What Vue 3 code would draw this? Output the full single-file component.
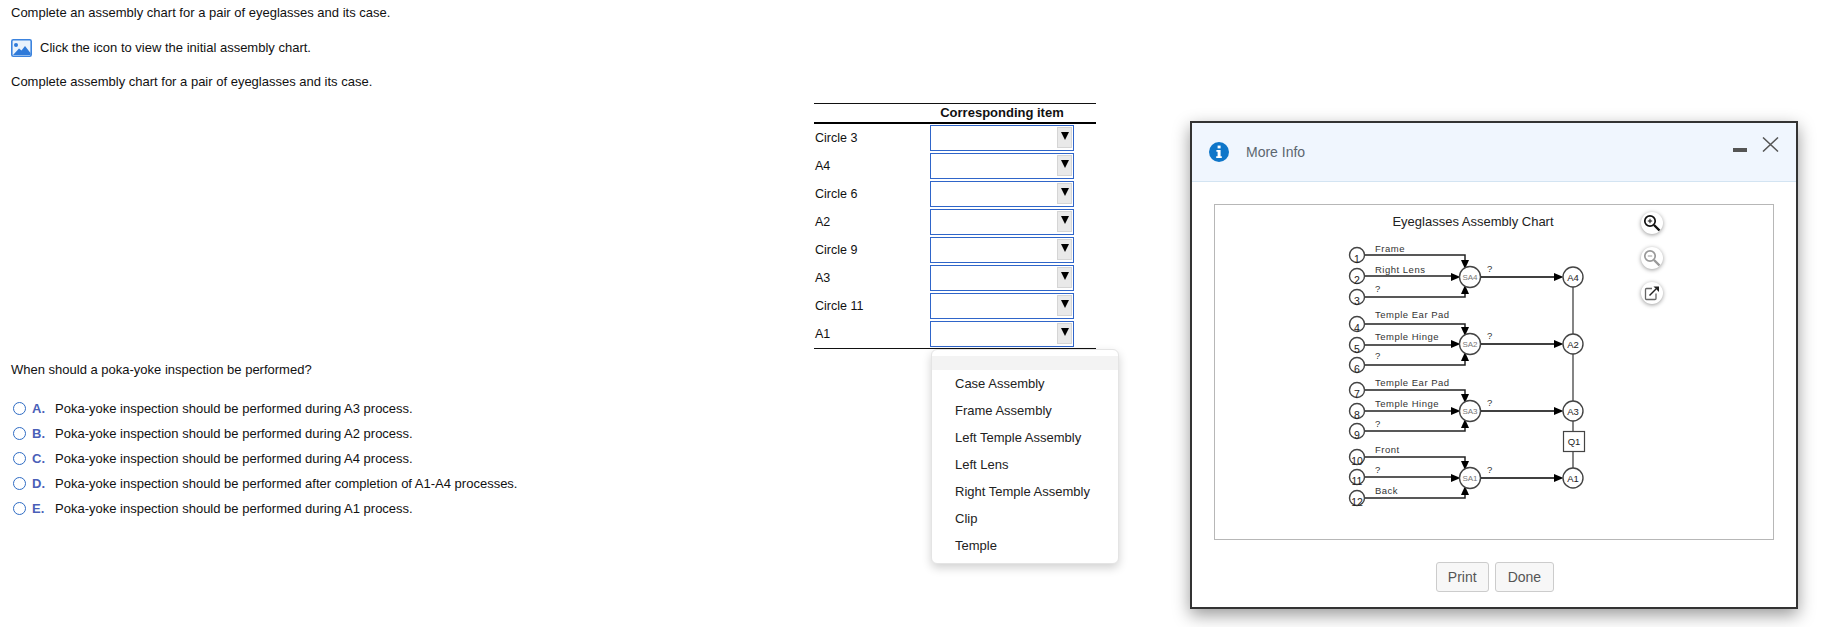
<script setup>
const rows = ['Circle 3', 'A4', 'Circle 6', 'A2', 'Circle 9', 'A3', 'Circle 11', 'A1']
const answers = [
  { key: 'A.', text: 'Poka-yoke inspection should be performed during A3 process.' },
  { key: 'B.', text: 'Poka-yoke inspection should be performed during A2 process.' },
  { key: 'C.', text: 'Poka-yoke inspection should be performed during A4 process.' },
  { key: 'D.', text: 'Poka-yoke inspection should be performed after completion of A1-A4 processes.' },
  { key: 'E.', text: 'Poka-yoke inspection should be performed during A1 process.' }
]
const menuItems = ['Case Assembly', 'Frame Assembly', 'Left Temple Assembly', 'Left Lens', 'Right Temple Assembly', 'Clip', 'Temple']

// one group = three inputs going into a sub assembly, then on to the final circle
const groups = [
  { sa: 'SA4', a: 'A4', y: 277, first: 1, ys: [255, 276, 297], labels: ['Frame', 'Right Lens', '?'], ly: [252, 273, 292] },
  { sa: 'SA2', a: 'A2', y: 344, first: 4, ys: [324, 345, 365], labels: ['Temple Ear Pad', 'Temple Hinge', '?'], ly: [318, 340, 359] },
  { sa: 'SA3', a: 'A3', y: 411, first: 7, ys: [390, 411, 431], labels: ['Temple Ear Pad', 'Temple Hinge', '?'], ly: [386, 407, 427] },
  { sa: 'SA1', a: 'A1', y: 478, first: 10, ys: [457, 477, 498], labels: ['Front', '?', 'Back'], ly: [453, 473, 494] }
]
</script>

<template>
  <div class="page">
    <p class="line first">Complete an assembly chart for a pair of eyeglasses and its case.</p>
    <p class="line icon-line">
      <svg class="img-icon" width="21" height="18" viewBox="0 0 21 18">
        <rect x="0.8" y="0.8" width="19.4" height="16.4" rx="1.5" fill="#e9f2fc" stroke="#3b83de" stroke-width="1.6" />
        <circle cx="5" cy="6" r="2" fill="#2f7ad9" />
        <path d="M2 16 L8 9.5 L10.5 11.5 L14 7 L19.5 14 V16 Z" fill="#2f7ad9" />
      </svg>
      <span>Click the icon to view the initial assembly chart.</span>
    </p>
    <p class="line third">Complete assembly chart for a pair of eyeglasses and its case.</p>

    <table class="items">
      <thead>
        <tr>
          <th></th>
          <th>Corresponding item</th>
        </tr>
      </thead>
      <tbody>
        <tr v-for="row in rows" :key="row">
          <td class="row-name">{{ row }}</td>
          <td>
            <div class="combo"><span class="combo-btn"><i></i></span></div>
          </td>
        </tr>
      </tbody>
    </table>

    <p class="line question">When should a poka-yoke inspection be performed?</p>
    <div class="answers">
      <label v-for="a in answers" :key="a.key" class="answer">
        <span class="radio"></span>
        <b>{{ a.key }}</b>
        <span>{{ a.text }}</span>
      </label>
    </div>

    <div class="menu">
      <div class="menu-blank"></div>
      <div v-for="item in menuItems" :key="item" class="menu-item">{{ item }}</div>
    </div>

    <section class="dialog">
      <header class="dialog-head">
        <svg width="20" height="20" viewBox="0 0 20 20">
          <circle cx="10" cy="10" r="10" fill="#0f76c9" />
          <rect x="8.6" y="3.6" width="3" height="2.8" fill="#fff" />
          <path d="M7.4 8h4.2v6.2h1.2v1.8H7.2v-1.8h1.4V9.8H7.4z" fill="#fff" />
        </svg>
        <span class="dialog-title">More Info</span>
        <span class="minimize"></span>
        <svg class="close" width="17" height="15" viewBox="0 0 17 15">
          <path d="M1 0.5 L16 14.5 M16 0.5 L1 14.5" stroke="#555" stroke-width="1.5" fill="none" />
        </svg>
      </header>

      <div class="dialog-body">
        <div class="chart">
          <svg class="diagram" width="557" height="333" viewBox="1215 205 557 333">
            <text x="1473" y="226" class="chart-title" text-anchor="middle">Eyeglasses Assembly Chart</text>
            <path d="M1573 287V468" class="spine" />
            <g v-for="g in groups" :key="g.sa">
              <g v-for="(y, i) in g.ys" :key="i">
                <path v-if="i === 0" :d="`M1364 ${y}H1465V${g.y - 15}`" class="wire" />
                <path v-else-if="i === 1" :d="`M1364 ${y}H1455`" class="wire" />
                <path v-else :d="`M1364 ${y}H1465V${g.y + 15}`" class="wire" />
                <circle cx="1357" :cy="y" r="7.5" class="node" />
                <text x="1357" :y="y + 7.5" class="num" text-anchor="middle">{{ g.first + i }}</text>
                <text x="1375" :y="g.ly[i]" class="label">{{ g.labels[i] }}</text>
              </g>
              <path :d="`M1461 ${g.y - 17}h8l-4 9z`" class="head" />
              <path :d="`M1451 ${g.y - 4}v8l9.5 -4z`" class="head" />
              <path :d="`M1461 ${g.y + 17}h8l-4 -9z`" class="head" />
              <circle cx="1470" :cy="g.y" r="10.5" class="node" />
              <text x="1470" :y="g.y + 3" class="sa" text-anchor="middle">{{ g.sa }}</text>
              <path :d="`M1481 ${g.y}H1556`" class="out" />
              <path :d="`M1554 ${g.y - 4}v8l9.5 -4z`" class="head" />
              <text x="1490" :y="g.y - 5" class="label" text-anchor="middle">?</text>
              <circle cx="1573" :cy="g.y" r="10" class="node" />
              <text x="1573" :y="g.y + 3.5" class="a-label" text-anchor="middle">{{ g.a }}</text>
            </g>
            <rect x="1563.5" y="431.5" width="21" height="20" class="qbox" />
            <text x="1574" y="445" class="a-label" text-anchor="middle">Q1</text>
          </svg>

          <div class="tools">
            <span class="tool">
              <svg width="18" height="18" viewBox="0 0 18 18">
                <circle cx="7" cy="7" r="5.2" fill="none" stroke="#111" stroke-width="1.7" />
                <path d="M11 11l5.5 5.5" stroke="#111" stroke-width="2.4" />
                <path d="M4.8 7h4.4M7 4.8v4.4" stroke="#111" stroke-width="1" />
              </svg>
            </span>
            <span class="tool">
              <svg width="18" height="18" viewBox="0 0 18 18">
                <circle cx="7" cy="7" r="5.2" fill="none" stroke="#999" stroke-width="1.7" />
                <path d="M11 11l5.5 5.5" stroke="#999" stroke-width="2.4" />
                <path d="M4.8 7h4.4" stroke="#999" stroke-width="1" />
              </svg>
            </span>
            <span class="tool">
              <svg width="16" height="16" viewBox="0 0 16 16">
                <path d="M8 3.5H2.5A1 1 0 0 0 1.5 4.5V13.5A1 1 0 0 0 2.5 14.5H11A1 1 0 0 0 12 13.5V8.5" fill="none" stroke="#666" stroke-width="1.3" />
                <path d="M5.5 10.5L12 4" stroke="#222" stroke-width="1.5" />
                <path d="M9.5 1.5H15V7z" fill="#222" />
              </svg>
            </span>
          </div>
        </div>

        <div class="dialog-foot">
          <button type="button">Print</button>
          <button type="button">Done</button>
        </div>
      </div>
    </section>
  </div>
</template>

<style>
html,
body {
  background: #fff;
}
</style>

<style scoped>
.page {
  position: relative;
  height: 627px;
  overflow: hidden;
  padding: 5px 0 0 11px;
  box-sizing: border-box;
  font-family: "Liberation Sans", Arial, sans-serif;
  font-size: 13px;
  color: #111;
}

.line {
  margin: 0;
  line-height: 16px;
}

.icon-line {
  display: flex;
  align-items: center;
  gap: 8px;
  margin-top: 18px;
  height: 18px;
}

.img-icon {
  display: block;
  flex: none;
}

.third {
  margin-top: 17px;
}

.items {
  margin: 13px 0 0 803px;
  width: 282px;
  border-collapse: collapse;
  border-top: 1px solid #111;
  border-bottom: 1px solid #111;
  font-size: 12.5px;
}

.items th {
  height: 19px;
  padding: 0 22px 1px 0;
  box-sizing: border-box;
  font-size: 13px;
  font-weight: bold;
  text-align: center;
  border-bottom: 2px solid #000;
}

.items th:first-child {
  width: 116px;
  padding: 0;
}

.items td {
  height: 28px;
  padding: 0;
}

.row-name {
  padding-left: 1px !important;
  vertical-align: middle;
}

.combo {
  display: flex;
  justify-content: flex-end;
  align-items: flex-start;
  box-sizing: border-box;
  width: 144px;
  height: 26px;
  padding: 1px 1px 0 0;
  border: 1px solid #2f65c9;
  background: #fff;
}

.combo-btn {
  display: flex;
  justify-content: center;
  padding-top: 4px;
  box-sizing: border-box;
  width: 15px;
  height: 21px;
  background: #e9e9e9;
  border: 1px solid #d5d5d5;
}

.combo-btn i {
  width: 0;
  height: 0;
  border-left: 4.5px solid transparent;
  border-right: 4.5px solid transparent;
  border-top: 8px solid #000;
}

.question {
  margin-top: 13px;
}

.answers {
  margin-top: 18px;
  display: flex;
  flex-direction: column;
}

.answer {
  display: flex;
  align-items: center;
  height: 25px;
}

.radio {
  box-sizing: border-box;
  width: 13px;
  height: 13px;
  margin-left: 2px;
  border: 1.3px solid #2f6cc4;
  border-radius: 50%;
}

.answer b {
  width: 23px;
  margin-left: 6px;
  color: #4a5fb8;
}

.menu {
  position: absolute;
  left: 931px;
  top: 349px;
  width: 188px;
  height: 215px;
  padding-top: 6px;
  box-sizing: border-box;
  background: #fff;
  border: 1px solid #e4e4e4;
  border-radius: 6px;
  box-shadow: 0 4px 10px rgba(0, 0, 0, 0.18);
  font-size: 13px;
  color: #222;
}

.menu-blank {
  height: 14px;
  background: #f3f3f3;
}

.menu-item {
  height: 27px;
  line-height: 27px;
  padding-left: 23px;
}

.dialog {
  position: absolute;
  left: 1190px;
  top: 121px;
  width: 608px;
  height: 488px;
  box-sizing: border-box;
  border: 2px solid #333;
  background: #fff;
  box-shadow: 0 6px 16px rgba(0, 0, 0, 0.4);
}

.dialog-head {
  position: relative;
  display: flex;
  align-items: center;
  height: 58px;
  padding-left: 17px;
  background: #f0f6fe;
  border-bottom: 1px solid #d3e4f2;
}

.dialog-title {
  margin-left: 17px;
  font-size: 14px;
  color: #5c6670;
}

.minimize {
  position: absolute;
  left: 541px;
  top: 25px;
  width: 14px;
  height: 4px;
  background: #555;
}

.close {
  position: absolute;
  left: 570px;
  top: 14px;
}

.dialog-body {
  padding: 22px 22px 0;
}

.chart {
  position: relative;
  height: 334px;
  border: 1px solid #b7b7b7;
}

.diagram {
  display: block;
}

.chart-title {
  font-size: 13px;
  fill: #222;
}

.wire {
  fill: none;
  stroke: #222;
  stroke-width: 1.5;
}

.out {
  fill: none;
  stroke: #000;
  stroke-width: 1.4;
}

.spine {
  fill: none;
  stroke: #666;
  stroke-width: 1.6;
}

.qbox {
  fill: #fff;
  stroke: #444;
  stroke-width: 1.2;
}

.head {
  fill: #000;
}

.node {
  fill: #fff;
  stroke: #444;
  stroke-width: 1.4;
}

.num {
  font-size: 10.5px;
  fill: #222;
}

.label {
  font-size: 9.5px;
  letter-spacing: 0.5px;
  fill: #333;
}

.sa {
  font-size: 8px;
  fill: #777;
}

.a-label {
  font-size: 9.5px;
  fill: #222;
}

.tools {
  position: absolute;
  left: 426px;
  top: 7px;
  display: flex;
  flex-direction: column;
  gap: 13px;
}

.tool {
  display: flex;
  align-items: center;
  justify-content: center;
  width: 22px;
  height: 22px;
  border-radius: 50%;
  background: #fff;
  box-shadow: 0 1px 4px rgba(0, 0, 0, 0.4);
}

.dialog-foot {
  display: flex;
  justify-content: center;
  gap: 6px;
  margin-top: 22px;
  padding-left: 2px;
}

.dialog-foot button {
  height: 30px;
  padding: 0 11px;
  background: #f7f7f7;
  border: 1px solid #ccc;
  border-radius: 3px;
  font-family: inherit;
  font-size: 14px;
  color: #555;
}

.dialog-foot button:last-child {
  padding: 0 12px;
}
</style>
